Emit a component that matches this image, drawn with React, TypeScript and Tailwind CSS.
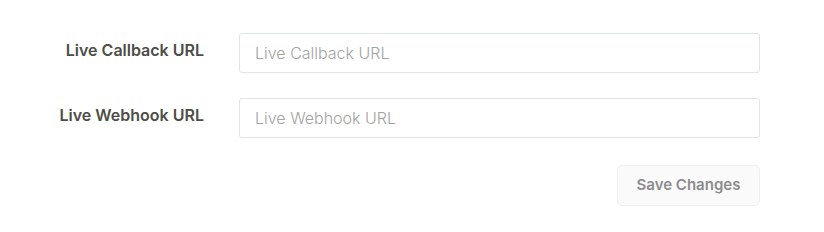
import React from "react";

export default function App() {
  return (
    <div className="w-[824px] h-[232px] bg-white" style={{ fontFamily: "Inter, 'Noto Sans', sans-serif" }}>
      <div className="pt-[33px] pr-[64px] flex flex-col gap-[25px]">
        <div className="flex items-start">
          <label className="w-[205px] pt-[5px] pr-px text-right text-[16px] font-semibold text-[#4d4d46]">Live Callback URL</label>
          <input
            placeholder="Live Callback URL"
            className="ml-[34px] flex-1 h-[40px] rounded-[3px] border border-[#dfe4e4] px-[15px] text-[16px] font-light text-[#333] placeholder:text-[#a3a3a3] outline-none"
          />
        </div>
        <div className="flex items-start">
          <label className="w-[205px] pt-[5px] pr-px text-right text-[16px] font-semibold text-[#4d4d46]">Live Webhook URL</label>
          <input
            placeholder="Live Webhook URL"
            className="ml-[34px] flex-1 h-[40px] rounded-[3px] border border-[#dfe4e4] px-[15px] text-[16px] font-light text-[#333] placeholder:text-[#a3a3a3] outline-none"
          />
        </div>
        <div className="flex justify-end mt-[2px]">
          <button className="w-[143px] h-[41px] rounded-[5px] border border-[#efefef] bg-[#fafafa] text-[15px] font-semibold text-[#8c8c8c]">
            Save Changes
          </button>
        </div>
      </div>
    </div>
  );
}
